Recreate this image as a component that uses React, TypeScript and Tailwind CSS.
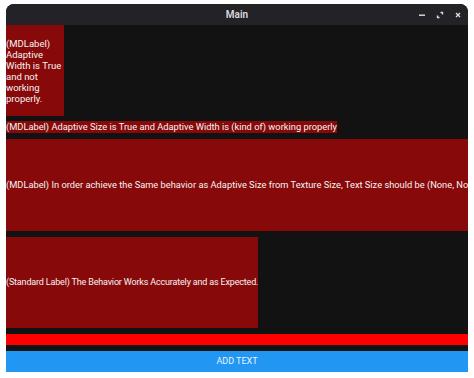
export default function App() {
  return (
    <div className="w-[474px] h-[378px] bg-white pt-[4px] pl-[6px] font-['Roboto',sans-serif]">
      <div className="w-[462px] h-[368px] flex flex-col bg-[#121212] rounded-t-[8px] overflow-hidden">
        {/* Title bar */}
        <div className="h-[21px] shrink-0 relative flex items-center justify-center bg-[#232327]">
          <span className="text-[10px] font-semibold text-[#d8d8dc] leading-none">Main</span>
          <div className="absolute right-[6px] top-0 h-full flex items-center gap-[10px] text-[#e0e0e0]">
            <svg width="8" height="8" viewBox="0 0 8 8">
              <rect x="1" y="3.5" width="6" height="1.4" fill="currentColor" />
            </svg>
            <svg width="8" height="8" viewBox="0 0 8 8" fill="none" stroke="currentColor" strokeWidth="1.3">
              <path d="M4.5 1.5H6.5V3.5" />
              <path d="M1.5 4.5V6.5H3.5" />
            </svg>
            <svg width="8" height="8" viewBox="0 0 8 8" fill="none" stroke="currentColor" strokeWidth="1.3">
              <path d="M2 2L6 6M6 2L2 6" />
            </svg>
          </div>
        </div>

        {/* Content */}
        <div className="flex flex-col flex-1 text-[#f4f4f4] text-[9.3px]">
          <div className="w-[58px] h-[91px] shrink-0 bg-[#880909] flex items-center leading-[11px] text-[9.5px]">
            <span>(MDLabel) Adaptive Width&nbsp;is&nbsp;True and not working properly.</span>
          </div>
          <div className="mt-[5px] h-[12px] shrink-0 self-start bg-[#880909] flex items-center whitespace-nowrap leading-none">
            (MDLabel) Adaptive Size is True and Adaptive Width is (kind of) working properly
          </div>
          <div className="mt-[6px] h-[92px] shrink-0 bg-[#880909] flex items-center whitespace-nowrap overflow-hidden">
            <span className="shrink-0">(MDLabel) In order achieve the Same behavior as Adaptive Size from Texture Size, Text Size should be (None, None)</span>
          </div>
          <div className="mt-[6px] h-[91px] self-start shrink-0 bg-[#880909] flex items-center whitespace-nowrap text-[9px] tracking-[-0.17px]">
            (Standard Label) The Behavior Works Accurately and as Expected.
          </div>
          <div className="mt-[6px] h-[11px] shrink-0 bg-[#ff0000]" />
          <button className="mt-[6px] h-[21px] shrink-0 bg-[#2196f3] text-[9px] text-[#eaf4ff]">
            ADD TEXT
          </button>
        </div>
      </div>
    </div>
  )
}
